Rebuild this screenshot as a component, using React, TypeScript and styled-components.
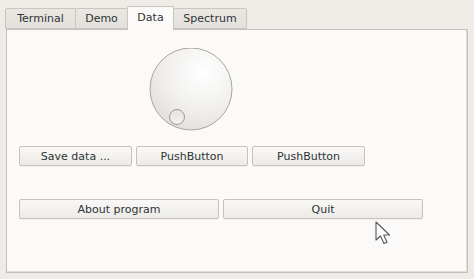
import React from "react";
import styled, { createGlobalStyle } from "styled-components";

const Global = createGlobalStyle`
  html, body { margin: 0; padding: 0; }
  body { background: #efece8; font-family: "DejaVu Sans", "Liberation Sans", sans-serif; }
`;

const Window = styled.div`
  position: relative;
  width: 474px;
  height: 279px;
  box-sizing: border-box;
  padding: 6px 6px 6px 6px;
  background: #efece8;
  display: flex;
  flex-direction: column;
`;

const TabBar = styled.div`
  display: flex;
  align-items: flex-end;
  height: 23px;
  padding-left: 0;
  margin-left: -1px;
  position: relative;
  z-index: 1;
`;

const Tab = styled.div<{ $active?: boolean; $w: number }>`
  box-sizing: border-box;
  width: ${(p) => p.$w}px;
  height: ${(p) => (p.$active ? 24 : 21)}px;
  margin-bottom: ${(p) => (p.$active ? -1 : 0)}px;
  display: flex;
  align-items: center;
  justify-content: center;
  font-size: 11px;
  color: #2e3436;
  border: 1px solid #c9c5c0;
  border-bottom: ${(p) => (p.$active ? "none" : "1px solid #c9c5c0")};
  margin-right: -1px;
  background: ${(p) =>
    p.$active ? "#fcfaf8" : "linear-gradient(#ebe8e4, #e3e0dc)"};
  padding-bottom: ${(p) => (p.$active ? 2 : 0)}px;
  border-radius: 2px 2px 0 0;
`;

const Panel = styled.div`
  flex: 1;
  box-sizing: border-box;
  border: 1px solid #c4c0bb;
  box-shadow: inset -1px -1px 0 #e2dfdb;
  background: #fcfaf8;
  padding: 18px 12px 0 12px;
  display: flex;
  flex-direction: column;
`;

const DialRow = styled.div`
  display: grid;
  grid-template-columns: 113px 112px 113px;
  column-gap: 4px;
  height: 82px;
`;

const DialCell = styled.div`
  grid-column: 2;
  display: flex;
  justify-content: center;
  align-items: flex-start;
`;

const DialSvg = styled.svg`
  display: block;
  margin-left: -2px;
`;

const ButtonRow = styled.div<{ $top: number }>`
  display: flex;
  gap: 4px;
  margin-top: ${(p) => p.$top}px;
`;

const Button = styled.div<{ $w: number }>`
  box-sizing: border-box;
  width: ${(p) => p.$w}px;
  height: 20px;
  display: flex;
  align-items: center;
  justify-content: center;
  font-size: 11px;
  color: #2e3436;
  border: 1px solid #c6c2bd;
  border-radius: 2px;
  background: linear-gradient(#f9f8f6, #ecebe8);
  box-shadow: 0 1px 0 rgba(0, 0, 0, 0.04);
`;

const Cursor = styled.svg`
  position: absolute;
  left: 375px;
  top: 221px;
`;

export default function App() {
  return (
    <>
      <Global />
      <Window>
        <TabBar>
          <Tab $w={71}>Terminal</Tab>
          <Tab $w={53}>Demo</Tab>
          <Tab $w={47} $active>
            Data
          </Tab>
          <Tab $w={74}>Spectrum</Tab>
        </TabBar>
        <Panel>
          <DialRow>
            <DialCell>
              <DialSvg width="86" height="84" viewBox="0 0 86 84">
                <defs>
                  <radialGradient id="dg" cx="65%" cy="30%" r="75%">
                    <stop offset="0" stopColor="#ffffff" />
                    <stop offset="0.6" stopColor="#f1f0ee" />
                    <stop offset="1" stopColor="#e2e0dd" />
                  </radialGradient>
                  <linearGradient id="kg" x1="0" y1="0" x2="0" y2="1">
                    <stop offset="0" stopColor="#e4e2df" />
                    <stop offset="1" stopColor="#f4f3f1" />
                  </linearGradient>
                </defs>
                <circle cx="43" cy="41" r="41" fill="url(#dg)" stroke="#a9a6a2" strokeWidth="1" />
                <circle cx="29" cy="69" r="7.5" fill="url(#kg)" stroke="#9e9b97" strokeWidth="1" />
              </DialSvg>
            </DialCell>
          </DialRow>
          <ButtonRow $top={16}>
            <Button $w={113}>Save data ...</Button>
            <Button $w={112}>PushButton</Button>
            <Button $w={113}>PushButton</Button>
          </ButtonRow>
          <ButtonRow $top={33}>
            <Button $w={200}>About program</Button>
            <Button $w={200}>Quit</Button>
          </ButtonRow>
        </Panel>
        <Cursor width="18" height="26" viewBox="0 0 18 26">
          <path
            d="M1 1 L1 19 L5.5 15 L9 22.5 L12 21.2 L8.7 14 L14.5 14 Z"
            fill="#ffffff"
            stroke="#55595a"
            strokeWidth="1.1"
            strokeLinejoin="round"
          />
        </Cursor>
      </Window>
    </>
  );
}
